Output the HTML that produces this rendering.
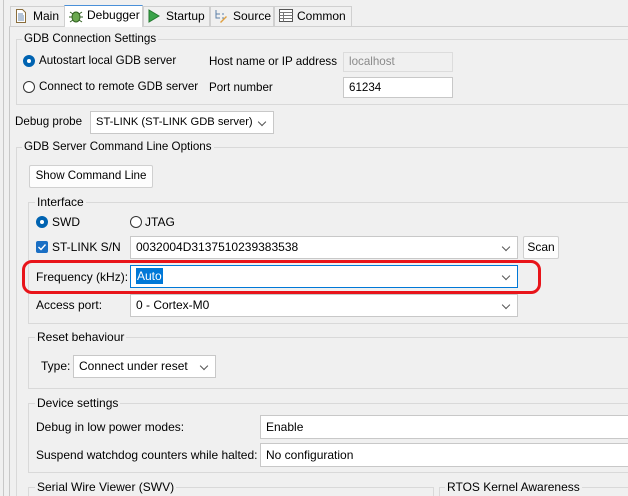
<!DOCTYPE html>
<html><head><meta charset="utf-8"><style>
*{box-sizing:border-box;margin:0;padding:0}
html{width:628px;height:496px;overflow:hidden}
body{width:628px;height:496px;overflow:hidden;background:#f0f0f0;font-family:"Liberation Sans",sans-serif;font-size:11.6px;color:#000;position:relative}
.a{position:absolute;white-space:nowrap}
.t{position:absolute;white-space:nowrap;line-height:14px}
.grp{position:absolute;border:1px solid #d9d9d9;}
.leg{position:absolute;background:#f0f0f0;padding:0 2px;line-height:14px;white-space:nowrap}
.box{position:absolute;background:#fff;border:1px solid #c8c8c8;line-height:20px;padding-left:5px;white-space:nowrap;overflow:hidden}
.dd::after{content:"";position:absolute;right:8px;top:7px;width:5px;height:5px;border-right:1px solid #555;border-bottom:1px solid #555;transform:rotate(45deg)}
.btn{position:absolute;background:#fdfdfd;border:1px solid #d0d0d0;border-radius:2px;text-align:center;line-height:20px}
.rad{position:absolute;width:12px;height:12px;border-radius:50%;border:1px solid #333;background:#fff}
.rad.on{border-color:#0063b1;background:#0063b1}
.rad.on::after{content:"";position:absolute;left:3px;top:3px;width:4px;height:4px;border-radius:50%;background:#fff}
.tab{position:absolute;top:6px;height:20px;border:1px solid #d0d0d0;border-bottom:none;background:#f0f0f0;line-height:19px;padding-left:22px;font-size:12px}
.sm{font-size:12px}
</style></head><body>
<div class="a" style="left:3px;top:0;width:1px;height:496px;background:#c8c8c8"></div>
<div class="a" style="left:9px;top:26px;width:1px;height:470px;background:#c8c8c8"></div>
<div class="a" style="left:9px;top:26px;width:619px;height:1px;background:#d0d0d0"></div>

<div class="tab" style="left:10px;width:55px">Main</div>
<svg class="a" style="left:15px;top:9px" width="12" height="14"><path d="M1.5 .5h6l3 3v10h-9z" fill="#fff" stroke="#8a6d3b"/><path d="M3 5h5M3 7h6M3 9h6M3 11h6" stroke="#6a88b0"/></svg>
<div class="tab" style="left:64px;width:79px;background:#fff;top:5px;height:22px;border-top:1px solid #4a90d9">Debugger</div>
<svg class="a" style="left:68px;top:8px" width="16" height="16"><ellipse cx="8" cy="9" rx="4" ry="5" fill="#6aa84f" stroke="#2f5f1f"/><path d="M2 4l3 2M14 4l-3 2M1 9h3M12 9h3M2 14l3-2M14 14l-3-2" stroke="#2f5f1f"/></svg>
<div class="tab" style="left:143px;width:67px">Startup</div>
<svg class="a" style="left:148px;top:9px" width="12" height="14"><path d="M1 1l10 6-10 6z" fill="#3aa34a" stroke="#24792f"/></svg>
<div class="tab" style="left:210px;width:64px">Source</div>
<svg class="a" style="left:214px;top:9px" width="14" height="14"><path d="M2 1v8h4M2 5h4M8 5h2M8 9h2" stroke="#5b7fa8" fill="none"/><path d="M6 13l6-6 1 1-6 6z" fill="#e0a040"/></svg>
<div class="tab" style="left:274px;width:78px">Common</div>
<svg class="a" style="left:279px;top:9px" width="14" height="13"><rect x=".5" y=".5" width="13" height="12" fill="#fff" stroke="#555"/><path d="M.5 3.5h13M4.5 3.5v9M.5 6.5h13M.5 9.5h13" stroke="#777"/></svg>

<div class="grp" style="left:16px;top:39px;width:620px;height:66px"></div>
<div class="leg" style="left:22px;top:32px">GDB Connection Settings</div>
<div class="rad on" style="left:23px;top:55px"></div>
<div class="t" style="left:39px;top:54px">Autostart local GDB server</div>
<div class="rad" style="left:23px;top:81px"></div>
<div class="t" style="left:39px;top:80px">Connect to remote GDB server</div>
<div class="t" style="left:209px;top:55px">Host name or IP address</div>
<div class="box" style="left:343px;top:52px;width:110px;height:20px;background:#f0f0f0;border-color:#dcdcdc;color:#8a8a8a;line-height:18px">localhost</div>
<div class="t" style="left:209px;top:81px">Port number</div>
<div class="box" style="left:343px;top:77px;width:110px;height:21px;line-height:19px">61234</div>

<div class="t" style="left:15px;top:115px">Debug probe</div>
<div class="box dd" style="left:90px;top:111px;width:184px;height:23px;line-height:21px;font-size:11.2px">ST-LINK (ST-LINK GDB server)</div>

<div class="grp" style="left:16px;top:147px;width:620px;height:360px"></div>
<div class="leg" style="left:22px;top:140px">GDB Server Command Line Options</div>
<div class="btn" style="left:29px;top:165px;width:124px;height:23px">Show Command Line</div>

<div class="grp" style="left:28px;top:202px;width:610px;height:122px"></div>
<div class="leg sm" style="left:35px;top:195px">Interface</div>
<div class="rad on" style="left:36px;top:216px"></div>
<div class="t sm" style="left:52px;top:215px">SWD</div>
<div class="rad" style="left:130px;top:216px"></div>
<div class="t sm" style="left:145px;top:215px">JTAG</div>
<div class="a" style="left:36px;top:241px;width:12px;height:12px;background:#1a6fc4;border-radius:2px"></div>
<svg class="a" style="left:36px;top:241px" width="12" height="12"><path d="M2.5 6l2.5 2.5 4.5-5" stroke="#fff" stroke-width="1.4" fill="none"/></svg>
<div class="t sm" style="left:52px;top:240px">ST-LINK S/N</div>
<div class="box dd sm" style="left:130px;top:236px;width:388px;height:23px;line-height:21px">0032004D3137510239383538</div>
<div class="btn sm" style="left:523px;top:236px;width:36px;height:23px">Scan</div>
<div class="t sm" style="left:36px;top:270px">Frequency (kHz):</div>
<div class="box dd sm" style="left:130px;top:265px;width:388px;height:23px;border-color:#0078d7;line-height:21px"><span style="background:#0078d7;color:#fff;padding:1px 1px">Auto</span></div>
<div class="a" style="left:22px;top:260px;width:519px;height:34px;border:3px solid #e8141a;border-radius:10px"></div>
<div class="t sm" style="left:36px;top:298px">Access port:</div>
<div class="box dd sm" style="left:130px;top:294px;width:388px;height:23px;line-height:21px">0 - Cortex-M0</div>

<div class="grp" style="left:28px;top:337px;width:610px;height:52px"></div>
<div class="leg sm" style="left:35px;top:330px">Reset behaviour</div>
<div class="t sm" style="left:41px;top:359px">Type:</div>
<div class="box dd sm" style="left:73px;top:355px;width:143px;height:23px;line-height:21px">Connect under reset</div>

<div class="grp" style="left:28px;top:403px;width:610px;height:70px"></div>
<div class="leg sm" style="left:35px;top:396px">Device settings</div>
<div class="t sm" style="left:36px;top:420px">Debug in low power modes:</div>
<div class="box sm" style="left:260px;top:415px;width:380px;height:24px;line-height:22px">Enable</div>
<div class="t sm" style="left:36px;top:448px">Suspend watchdog counters while halted:</div>
<div class="box sm" style="left:260px;top:443px;width:380px;height:24px;line-height:22px">No configuration</div>

<div class="grp" style="left:28px;top:487px;width:406px;height:9px;border-bottom:none"></div>
<div class="leg sm" style="left:35px;top:480px">Serial Wire Viewer (SWV)</div>
<div class="grp" style="left:439px;top:487px;width:200px;height:9px;border-bottom:none"></div>
<div class="leg sm" style="left:445px;top:480px">RTOS Kernel Awareness</div>
</body></html>
